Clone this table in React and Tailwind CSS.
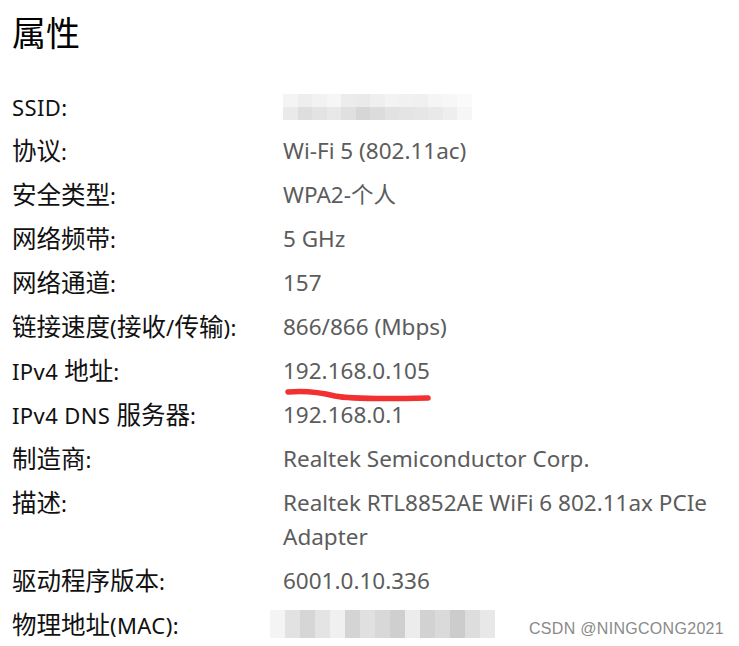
const font = { fontFamily: '"Noto Sans", "Noto Sans CJK SC", sans-serif' };

const rows = [
  { label: "SSID:", value: "ssid" },
  { label: "协议:", value: "Wi-Fi 5 (802.11ac)" },
  { label: "安全类型:", value: "WPA2-个人" },
  { label: "网络频带:", value: "5 GHz" },
  { label: "网络通道:", value: "157" },
  { label: "链接速度(接收/传输):", value: "866/866 (Mbps)" },
  { label: "IPv4 地址:", value: "192.168.0.105", mark: true },
  { label: "IPv4 DNS 服务器:", value: "192.168.0.1" },
  { label: "制造商:", value: "Realtek Semiconductor Corp." },
  { label: "描述:", value: "Realtek RTL8852AE WiFi 6 802.11ax PCIe Adapter" },
  { label: "驱动程序版本:", value: "6001.0.10.336" },
  { label: "物理地址(MAC):", value: "mac" },
];

const ssidTiles = [
  ["#f4f4f4", "#eeeeee", "#f2f2f2", "#f6f6f6", "#ececec", "#eaeaea", "#efefef", "#f3f3f3", "#f1f1f1", "#f0f0f0", "#f5f5f5", "#f7f7f7", "#fafafa"],
  ["#eaeaea", "#dedede", "#e3e3e3", "#e8e8e8", "#e0e0e0", "#d6d6d6", "#dcdcdc", "#e2e2e2", "#e4e4e4", "#e6e6e6", "#e9e9e9", "#eeeeee", "#f6f6f6"],
];

const macTiles = [
  "#f4f4f4", "#e2e2e2", "#d6d6d6", "#e4e4e4", "#f0f0f0", "#d4d4d4", "#e0e0e0", "#d8d8d8", "#cfcfcf", "#ececec", "#d2d2d2", "#dadada", "#cccccc", "#dddddd", "#e8e8e8",
];

// CJK glyphs in the labels render wider than the latin ones
function Label({ text }) {
  const parts = text.match(/[\u4e00-\u9fff]+|[^\u4e00-\u9fff]+/g);
  return parts.map((p, i) =>
    /[\u4e00-\u9fff]/.test(p) ? (
      <span key={i} className="text-[24.5px]">{p}</span>
    ) : (
      <span key={i} className="tracking-[0.4px]">{p}</span>
    )
  );
}

function Mosaic() {
  return (
    <div className="flex flex-col mt-[4px] rounded-r-[10px] overflow-hidden">
      {ssidTiles.map((r, i) => (
        <div key={i} className="flex">
          {r.map((c, j) => (
            <div key={j} className="w-[14.5px] h-[13px]" style={{ background: c }} />
          ))}
        </div>
      ))}
    </div>
  );
}

function MacMosaic() {
  return (
    <div className="flex -ml-[13px] mt-[2px] h-[28px] items-stretch">
      {macTiles.map((c, j) => (
        <div key={j} className="w-[15px]" style={{ background: c }} />
      ))}
    </div>
  );
}

export default function App() {
  return (
    <div className="relative w-[739px] h-[646px] bg-white overflow-hidden pl-[12px]" style={font}>
      <h1 className="text-[34px] leading-[44px] pt-[11px] text-black font-normal">属性</h1>
      <div className="mt-[35px] flex flex-col gap-[10px]">
        {rows.map((r) => (
          <div key={r.label} className="flex text-[22px] leading-[34px]">
            <div className="w-[271px] shrink-0 text-[#111111] whitespace-nowrap">
              <Label text={r.label} />
            </div>
            <div className="relative text-[#5c5c5c] text-[22.5px] w-[445px]">
              {r.value === "ssid" ? (
                <Mosaic />
              ) : r.value === "mac" ? (
                <MacMosaic />
              ) : (
                r.value
              )}
              {r.mark && (
                <svg className="absolute left-0 top-[30px]" width="160" height="20" viewBox="0 0 160 20">
                  <path
                    d="M5 8 C 25 6, 40 9, 52 12 C 66 15, 100 15, 145 14"
                    fill="none"
                    stroke="#f23030"
                    strokeWidth="5.5"
                    strokeLinecap="round"
                  />
                </svg>
              )}
            </div>
          </div>
        ))}
      </div>
      <div
        className="absolute right-[15px] bottom-[5px] text-[16px] text-[#8a8a8a] tracking-[0.3px]"
        style={{ fontFamily: '"Liberation Sans", sans-serif' }}
      >
        CSDN @NINGCONG2021
      </div>
    </div>
  );
}
